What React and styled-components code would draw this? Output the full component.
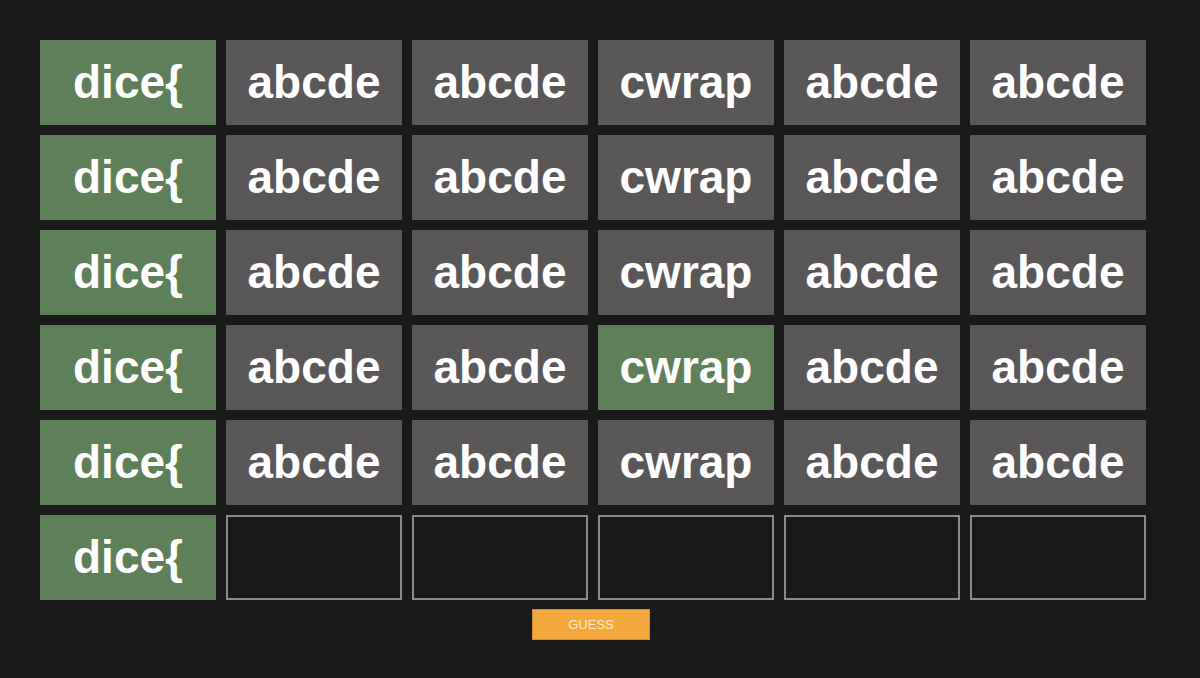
import styled, { createGlobalStyle } from 'styled-components';

const GlobalStyle = createGlobalStyle`
    html, body {
        margin: 0;
        padding: 0;
        background-color: #1a1a1a;
        font-family: "Liberation Sans", Arial, sans-serif;
    }
`;

const Page = styled.div`
    min-height: 678px;
    padding: 40px 0 0 40px;
    box-sizing: border-box;
    display: flex;
    flex-direction: column;
    align-items: flex-start;
`;

const Board = styled.div`
    display: grid;
    grid-template-columns: repeat(6, 176px);
    grid-auto-rows: 85px;
    gap: 10px;
`;

const TILE_COLORS = {
    correct: '#5f7f5b',
    absent: '#5a5758',
    empty: '#1a1a1a',
};

const Tile = styled.div`
    box-sizing: border-box;
    display: flex;
    align-items: center;
    justify-content: center;
    background-color: ${({ $state }) => TILE_COLORS[$state]};
    border: ${({ $state }) => ($state === 'empty' ? '2px solid #8a8a8a' : 'none')};
    color: #ffffff;
    font-size: 46px;
    font-weight: 700;
    padding-bottom: 2px;
`;

const Footer = styled.div`
    width: 1106px;
    display: flex;
    justify-content: center;
    margin-top: 9px;
`;

const GuessButton = styled.button`
    width: 118px;
    height: 31px;
    margin-right: 4px;
    border: 1px solid #d38f2c;
    background-color: #f3a93e;
    color: #fde8c4;
    font-family: "Liberation Sans", Arial, sans-serif;
    font-size: 13px;
    cursor: pointer;
`;

const GUESSES = [
    ['dice{', 'abcde', 'abcde', 'cwrap', 'abcde', 'abcde'],
    ['dice{', 'abcde', 'abcde', 'cwrap', 'abcde', 'abcde'],
    ['dice{', 'abcde', 'abcde', 'cwrap', 'abcde', 'abcde'],
    ['dice{', 'abcde', 'abcde', 'cwrap', 'abcde', 'abcde'],
    ['dice{', 'abcde', 'abcde', 'cwrap', 'abcde', 'abcde'],
    ['dice{', '', '', '', '', ''],
];

const tileState = (word, row, col) => {
    if (!word) return 'empty';
    if (col === 0) return 'correct';
    if (row === 3 && col === 3) return 'correct';
    return 'absent';
};

const App = () => {
    return (
        <Page>
            <GlobalStyle />
            <Board>
                {GUESSES.map((row, r) =>
                    row.map((word, c) => (
                        <Tile key={`${r}-${c}`} $state={tileState(word, r, c)}>
                            {word}
                        </Tile>
                    ))
                )}
            </Board>
            <Footer>
                <GuessButton>GUESS</GuessButton>
            </Footer>
        </Page>
    );
};

export default App;
